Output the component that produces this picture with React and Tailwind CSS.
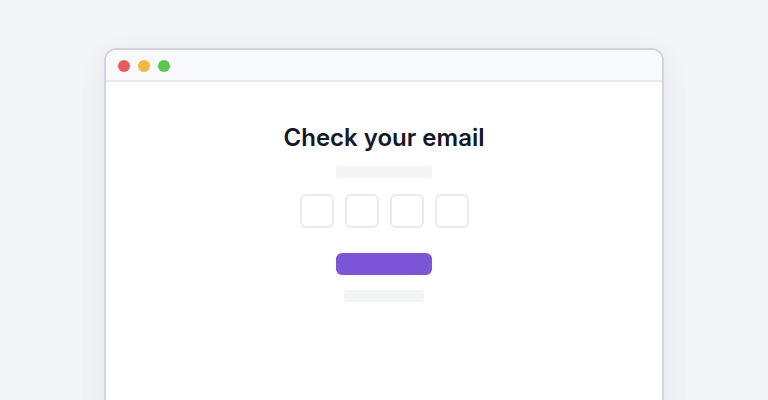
export default function App() {
  return (
    <div className="h-[400px] w-full overflow-hidden bg-[#f3f4f7] pt-12" style={{ fontFamily: 'Inter, "Noto Sans", sans-serif' }}>
      <div className="mx-auto h-[380px] w-[560px] overflow-hidden rounded-t-xl border-2 border-[#d4d6dd] bg-white shadow-[0_8px_30px_rgba(17,24,39,0.06)]">
        {/* title bar */}
        <div className="flex h-[32px] items-center gap-2 border-b-2 border-[#e8e9ee] bg-[#f8f9fb] pl-3 pt-0.5">
          <span className="h-3 w-3 rounded-full bg-[#e85c5c]" />
          <span className="h-3 w-3 rounded-full bg-[#f2b740]" />
          <span className="h-3 w-3 rounded-full bg-[#5cc451]" />
        </div>

        {/* content */}
        <div className="flex flex-col items-center pt-10">
          <h1 className="text-2xl font-semibold leading-8 text-[#111827]">Check your email</h1>
          <div className="mt-3 h-3 w-24 rounded bg-[#f3f4f6]" />
          <div className="mt-4 flex gap-[11px]">
            {[0, 1, 2, 3].map((i) => (
              <div key={i} className="h-[34px] w-[34px] rounded-md border-2 border-[#e9eaed]" />
            ))}
          </div>
          <div className="mt-[25px] h-[22px] w-24 rounded-md bg-[#7b55d6]" />
          <div className="mt-[15px] h-3 w-20 rounded bg-[#f3f4f6]" />
        </div>
      </div>
    </div>
  );
}
